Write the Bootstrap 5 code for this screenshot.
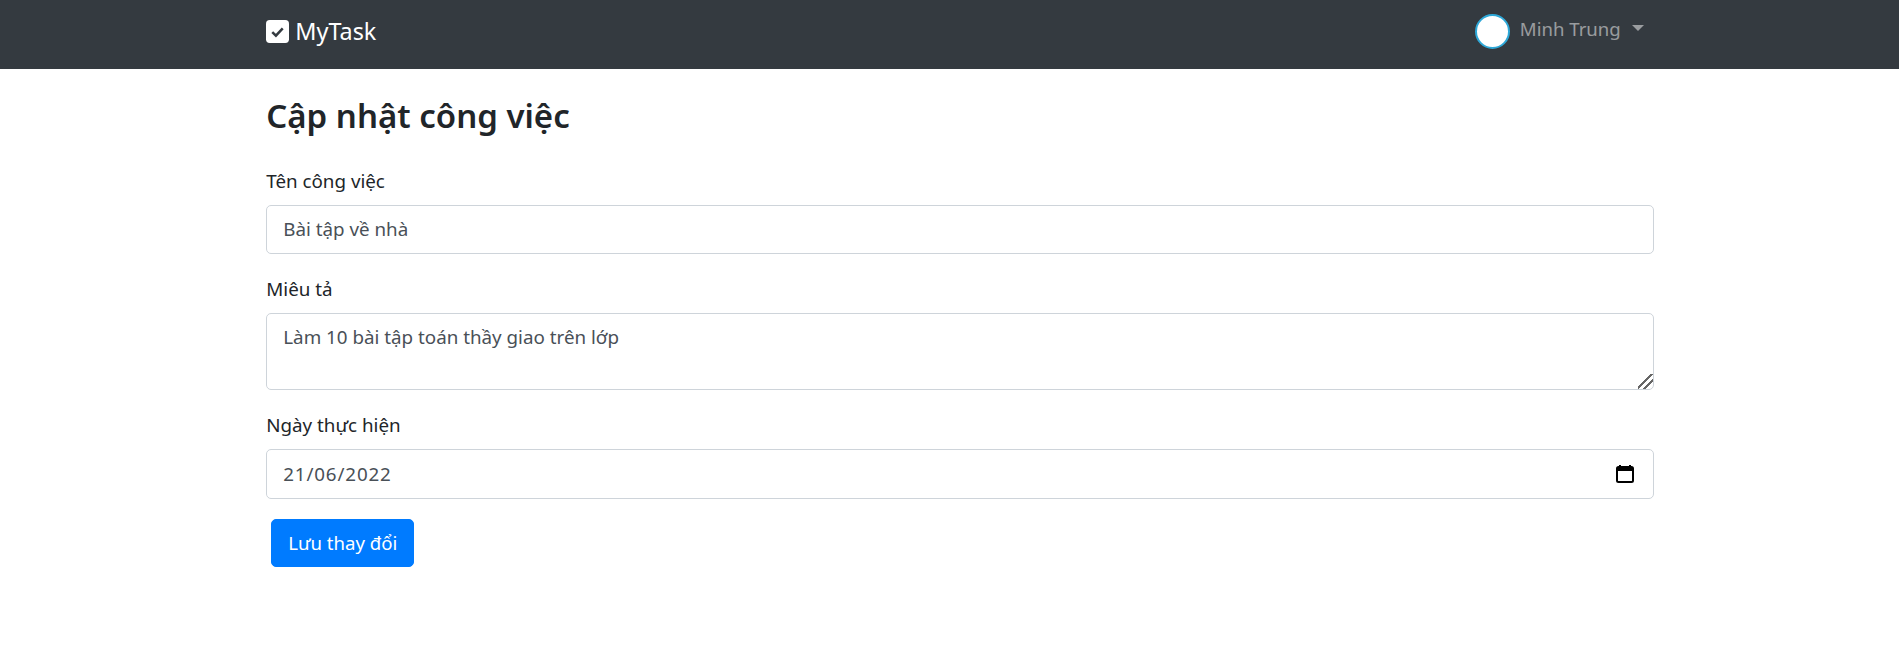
<!DOCTYPE html>
<html lang="vi">
<head>
    <meta charset="UTF-8">
    <meta name="viewport" content="width=device-width, initial-scale=1.0">
    <title>MyTask</title>
    <link href="https://cdn.jsdelivr.net/npm/bootstrap@5.3.0/dist/css/bootstrap.min.css" rel="stylesheet">
    <style>
        body { font-family: "Noto Sans", sans-serif; font-size: 18.8px; color: #212529; overflow: hidden; }
        .page-wrap { width: 1425px; margin-left: 247.5px; padding-left: 18.75px; padding-right: 18.75px; }
        .top-bar { background: #343a40; height: 69px; }
        .top-bar .page-wrap { height: 100%; }
        .brand-link { color: #fff; font-size: 23.4px; text-decoration: none; gap: 6px; margin-top: -5px; }
        .brand-link:hover { color: #fff; }
        .user-toggle { color: rgba(255,255,255,.5); font-size: 18.6px; text-decoration: none; margin-right: 10px; margin-top: -11px; }
        .user-toggle:hover { color: rgba(255,255,255,.5); }
        .user-toggle.dropdown-toggle::after { margin-left: 11px; border-width: 6px 6px 0; transform: translateY(-1px); }
        .user-avatar { width: 35px; height: 35px; border-radius: 50%; background: #fff; border: 2px solid #2ea8d8; margin-right: 10px; margin-top: 5px; }
        .page-title { font-size: 33px; font-weight: 600; margin-top: 27px; margin-bottom: 30px; line-height: 1.2; }
        .field-label { margin-bottom: 9px; line-height: 30px; display: block; }
        .field-row { margin-bottom: 20px; }
        .field-input { font-size: 18.8px; color: #495057; border-color: #ced4da; padding: 7px 16px; height: 49px; border-radius: 5px; }
        textarea.field-input { height: 77px; padding-top: 9px; }
        textarea.field-input::-webkit-resizer { background: linear-gradient(135deg, transparent 42%, #666 42% 52%, transparent 52% 66%, #666 66% 76%, transparent 76%); }
        .date-value { letter-spacing: .85px; height: 50px; }
        .date-wrap { position: relative; }
        .date-icon { position: absolute; right: 19px; top: 15px; }
        .save-btn { background: #007bff; border-color: #007bff; color: #fff; font-size: 18.6px; height: 48px; padding: 0 16px; margin-left: 5px; border-radius: 5px; }
    </style>
</head>
<body>
    <nav class="top-bar">
        <div class="page-wrap d-flex align-items-center justify-content-between">
            <a class="brand-link d-flex align-items-center" href="#">
                <svg width="23" height="23" viewBox="0 0 22 22"><rect width="22" height="22" rx="3.5" fill="#fff"/><path d="M6 11.5l3.5 3.5L16 8" fill="none" stroke="#343a40" stroke-width="2.4"/></svg>
                MyTask
            </a>
            <div class="dropdown">
                <a class="user-toggle dropdown-toggle d-flex align-items-center" href="#" data-bs-toggle="dropdown">
                    <span class="user-avatar"></span>Minh Trung
                </a>
            </div>
        </div>
    </nav>

    <div class="page-wrap">
        <h1 class="page-title">Cập nhật công việc</h1>
        <form>
            <div class="field-row">
                <label class="field-label">Tên công việc</label>
                <input type="text" class="form-control field-input" value="Bài tập về nhà">
            </div>
            <div class="field-row">
                <label class="field-label">Miêu tả</label>
                <textarea class="form-control field-input">Làm 10 bài tập toán thầy giao trên lớp</textarea>
            </div>
            <div class="field-row">
                <label class="field-label">Ngày thực hiện</label>
                <div class="date-wrap">
                    <input type="text" class="form-control field-input date-value" value="21/06/2022">
                    <svg class="date-icon" width="20" height="20" viewBox="0 0 20 20"><path d="M5 1v2M15 1v2" stroke="#000" stroke-width="2"/><rect x="2" y="3" width="16" height="15" rx="1.5" fill="none" stroke="#000" stroke-width="2"/><rect x="2" y="3" width="16" height="4" fill="#000"/></svg>
                </div>
            </div>
            <button type="button" class="btn save-btn">Lưu thay đổi</button>
        </form>
    </div>

    <script src="https://cdn.jsdelivr.net/npm/bootstrap@5.3.0/dist/js/bootstrap.bundle.min.js"></script>
</body>
</html>
